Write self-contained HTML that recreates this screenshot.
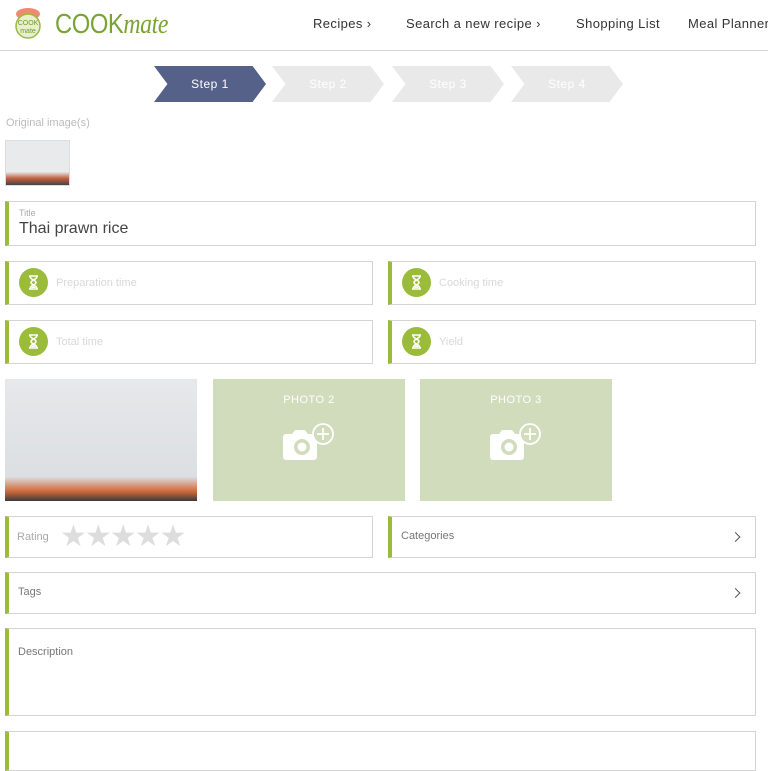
<!DOCTYPE html>
<html><head><style>
*{box-sizing:border-box;margin:0;padding:0}
body{width:768px;height:736px;overflow:hidden;background:#fff;font-family:"Liberation Sans",sans-serif;position:relative}
.a{position:absolute}
.box{position:absolute;border:1px solid #d4d4d4;border-left:4px solid #9bbb3a;background:#fff}
.ph{position:absolute;color:#d8d8d8;font-size:11px}
.ic{position:absolute;left:10px;top:6px;width:29px;height:29px}
.nav{position:absolute;top:16px;font-size:13px;color:#333;letter-spacing:.4px;white-space:nowrap}
.step{position:absolute;top:66px;height:36px;width:112px;clip-path:polygon(0 0,88% 0,100% 50%,88% 100%,0 100%,12% 50%);background:#e9e9e9;color:#fff;font-size:12px;line-height:36px;text-align:center;letter-spacing:.5px}
.photo{position:absolute;top:379px;width:192px;height:122px;background:#d0dcbc;color:#fff;font-size:11px;text-align:center;padding-top:15px;letter-spacing:.5px}
.photo svg{position:absolute;left:68px;top:44px}
.chev{position:absolute;right:16px;top:50%;width:7px;height:7px;border-right:1.5px solid #555;border-top:1.5px solid #555;transform:translateY(-50%) rotate(45deg)}
</style></head><body>
<svg width="0" height="0" style="position:absolute"><defs>
<symbol id="hg" viewBox="0 0 29 29"><circle cx="14.5" cy="14.5" r="14.5" fill="#9bbb3a"/><path d="M10 8h9M10 21h9M11 8c0 4 6 4 6 6.5S11 17 11 21M18 8c0 4-6 4-6 6.5s6 2.5 6 6.5" stroke="#fff" stroke-width="1.6" fill="none"/><path d="M12 20l2.5-2 2.5 2z" fill="#fff"/></symbol>
<symbol id="cam" viewBox="0 0 56 40"><path d="M2 14a3 3 0 0 1 3-3h6l3-4h10l3 4h6a3 3 0 0 1 3 3v20a3 3 0 0 1-3 3H5a3 3 0 0 1-3-3z" fill="#fff"/><circle cx="21" cy="24" r="8" fill="#d0dcbc"/><circle cx="21" cy="24" r="4.5" fill="#fff"/><circle cx="42" cy="11" r="10" fill="#d0dcbc" stroke="#fff" stroke-width="1.8"/><path d="M42 5v12M36 11h12" stroke="#fff" stroke-width="1.8"/></symbol>
</defs></svg>
<div class="a" style="left:10px;top:3px;width:36px;height:38px">
<svg width="36" height="38"><ellipse cx="18" cy="11" rx="12" ry="6" fill="#ee8a70"/><circle cx="18" cy="23" r="12" fill="#e7efcf" stroke="#9bbb3a" stroke-width="1.5"/><text x="18" y="22" font-size="7" text-anchor="middle" fill="#6f9a2a">COOK</text><text x="18" y="30" font-size="7" text-anchor="middle" fill="#6f9a2a">mate</text></svg></div>
<div class="a" style="left:55px;top:8px;font-size:28px;color:#7aa335;font-family:'Liberation Sans Narrow','Liberation Sans',sans-serif;font-weight:300;transform:scaleX(.85);transform-origin:left;letter-spacing:-0.5px">COOK<span style="font-family:'Liberation Serif',serif;font-style:italic">mate</span></div>
<div class="nav" style="left:313px">Recipes ›</div>
<div class="nav" style="left:406px">Search a new recipe ›</div>
<div class="nav" style="left:576px">Shopping List</div>
<div class="nav" style="left:688px">Meal Planner</div>
<div class="a" style="left:0;top:50px;width:768px;height:1px;background:#d4d4d4"></div>
<div class="step" style="left:154px;background:#56618a">Step 1</div>
<div class="step" style="left:272px">Step 2</div>
<div class="step" style="left:392px">Step 3</div>
<div class="step" style="left:511px">Step 4</div>
<div class="a" style="left:6px;top:117px;font-size:11px;color:#bbb">Original image(s)</div>
<div class="a" style="left:5px;top:140px;width:65px;height:46px;background:linear-gradient(#e8eaec 70%,#c06040 85%,#444 100%);border:1px solid #ddd"></div>
<div class="box" style="left:5px;top:201px;width:751px;height:45px"><div class="ph" style="left:10px;top:6px;font-size:9px;color:#aaa">Title</div><div class="a" style="left:10px;top:18px;font-size:16px;color:#444">Thai prawn rice</div></div>
<div class="box" style="left:5px;top:261px;width:368px;height:44px"><svg class="ic"><use href="#hg"/></svg><div class="ph" style="left:47px;top:15px">Preparation time</div></div>
<div class="box" style="left:388px;top:261px;width:368px;height:44px"><svg class="ic"><use href="#hg"/></svg><div class="ph" style="left:47px;top:15px">Cooking time</div></div>
<div class="box" style="left:5px;top:320px;width:368px;height:44px"><svg class="ic"><use href="#hg"/></svg><div class="ph" style="left:47px;top:15px">Total time</div></div>
<div class="box" style="left:388px;top:320px;width:368px;height:44px"><svg class="ic"><use href="#hg"/></svg><div class="ph" style="left:47px;top:15px">Yield</div></div>
<div class="a" style="left:5px;top:379px;width:192px;height:122px;background:linear-gradient(#e6e8ea 0%,#dcdfe2 80%,#d06a3a 92%,#3a3a3a 100%)"></div>
<div class="photo" style="left:213px">PHOTO 2<svg width="56" height="40"><use href="#cam"/></svg></div>
<div class="photo" style="left:420px">PHOTO 3<svg width="56" height="40"><use href="#cam"/></svg></div>
<div class="box" style="left:5px;top:516px;width:368px;height:42px"><div class="ph" style="left:8px;top:14px;color:#aaa">Rating</div><div class="a" style="left:51px;top:2px;font-size:30px;color:#ddd;letter-spacing:-2px;font-family:'DejaVu Sans',sans-serif">★★★★★</div></div>
<div class="box" style="left:388px;top:516px;width:368px;height:42px"><div class="ph" style="left:9px;top:13px;color:#777">Categories</div><div class="chev"></div></div>
<div class="box" style="left:5px;top:572px;width:751px;height:42px"><div class="ph" style="left:9px;top:13px;color:#777">Tags</div><div class="chev"></div></div>
<div class="box" style="left:5px;top:628px;width:751px;height:88px"><div class="ph" style="left:9px;top:17px;color:#777">Description</div></div>
<div class="box" style="left:5px;top:731px;width:751px;height:40px"></div>
</body></html>
